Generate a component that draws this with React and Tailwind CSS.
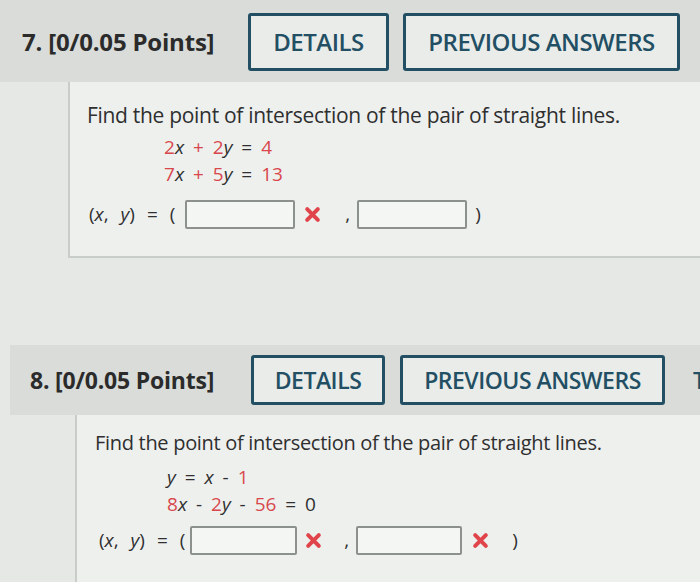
import React from 'react'

const font = { fontFamily: '"Open Sans", "DejaVu Sans", sans-serif' }

function XMark() {
  return (
    <svg width="17" height="17" viewBox="0 0 16 16" className="shrink-0">
      <path d="M3 3 L13 13 M13 3 L3 13" stroke="#e0454b" strokeWidth="3.8" strokeLinecap="round" />
    </svg>
  )
}

function Header({ num, className, btnH, detailsW, prevW, gap, titleW, size, tail }) {
  return (
    <div className={`flex items-center overflow-hidden bg-[#d9dcd9] ${className}`}>
      <div className={`${titleW} ${size} shrink-0 font-bold tracking-[-0.2px] text-[#2b2b2b]`}>
        {num}. [0/0.05 Points]
      </div>
      <button className={`${detailsW} ${btnH} ${size} shrink-0 rounded-[3px] border-[3px] border-[#224f63] bg-[#e9ece9] font-semibold tracking-[-0.5px] text-[#224f63]`}>
        DETAILS
      </button>
      <button className={`${gap} ${prevW} ${btnH} ${size} shrink-0 rounded-[3px] border-[3px] border-[#224f63] bg-[#e9ece9] font-semibold tracking-[-0.5px] text-[#224f63]`}>
        PREVIOUS ANSWERS
      </button>
      {tail && <span className={`ml-[28px] shrink-0 ${size} font-semibold text-[#224f63]`}>{tail}</span>}
    </div>
  )
}

function Input({ w }) {
  return <div className={`${w} h-[29px] shrink-0 rounded-[2px] border-2 border-[#8c918d] bg-[#f4f6f4]`} />
}

function R({ children }) {
  return <span className="text-[#d9474c]">{children}</span>
}

function V({ children }) {
  return <i>{children}</i>
}

export default function App() {
  return (
    <div style={font} className="h-[582px] w-[700px] overflow-hidden bg-[#e5e8e5] text-[#2f2f2f]">
      <Header
        num="7"
        className="h-[82px] pl-[22px] pt-[2px]"
        titleW="w-[226px]"
        size="text-[24px]"
        btnH="h-[58px]"
        detailsW="w-[141px]"
        prevW="w-[277px]"
        gap="ml-[14px]"
      />
      <div className="ml-[68px] h-[176px] border-b-2 border-l-2 border-[#c9cdc9] bg-[#eef0ee] pl-[17px] pt-[18px]">
        <p className="text-[21px] tracking-[-0.3px]">Find the point of intersection of the pair of straight lines.</p>
        <div className="ml-[77px] mt-[2px] text-[19px] leading-[27px] [word-spacing:4px]">
          <div>
            <R>2</R><V>x</V> <R>+</R> <R>2</R><V>y</V> = <R>4</R>
          </div>
          <div>
            <R>7</R><V>x</V> <R>+</R> <R>5</R><V>y</V> = <R>13</R>
          </div>
        </div>
        <div className="mt-[12px] flex items-center text-[19px]">
          <span className="ml-[2px] [word-spacing:7px]">(<V>x</V>, <V>y</V>) = (</span>
          <span className="ml-[10px]"><Input w="w-[110px]" /></span>
          <span className="ml-[9px]"><XMark /></span>
          <span className="ml-[24px]">,</span>
          <span className="ml-[7px]"><Input w="w-[110px]" /></span>
          <span className="ml-[8px]">)</span>
        </div>
      </div>
      <div className="h-[87px]" />
      <Header
        num="8"
        className="ml-[10px] h-[70px] pl-[20px]"
        titleW="w-[221px]"
        size="text-[23px]"
        btnH="h-[50px]"
        detailsW="w-[134px]"
        prevW="w-[265px]"
        gap="ml-[15px]"
        tail="T"
      />
      <div className="ml-[75px] h-[180px] border-l-2 border-[#c9cdc9] bg-[#eef0ee] pl-[18px] pt-[13px]">
        <p className="text-[20px] tracking-[-0.3px]">Find the point of intersection of the pair of straight lines.</p>
        <div className="ml-[72px] mt-[6px] text-[19px] leading-[27px] [word-spacing:4px]">
          <div>
            <V>y</V> = <V>x</V> - <R>1</R>
          </div>
          <div>
            <R>8</R><V>x</V> - <R>2</R><V>y</V> - <R>56</R> = 0
          </div>
        </div>
        <div className="mt-[8px] flex items-center text-[19px]">
          <span className="ml-[4px] [word-spacing:7px]">(<V>x</V>, <V>y</V>) = (</span>
          <span className="ml-[5px]"><Input w="w-[107px]" /></span>
          <span className="ml-[8px]"><XMark /></span>
          <span className="ml-[22px]">,</span>
          <span className="ml-[7px]"><Input w="w-[106px]" /></span>
          <span className="ml-[10px]"><XMark /></span>
          <span className="ml-[23px]">)</span>
        </div>
      </div>
    </div>
  )
}
